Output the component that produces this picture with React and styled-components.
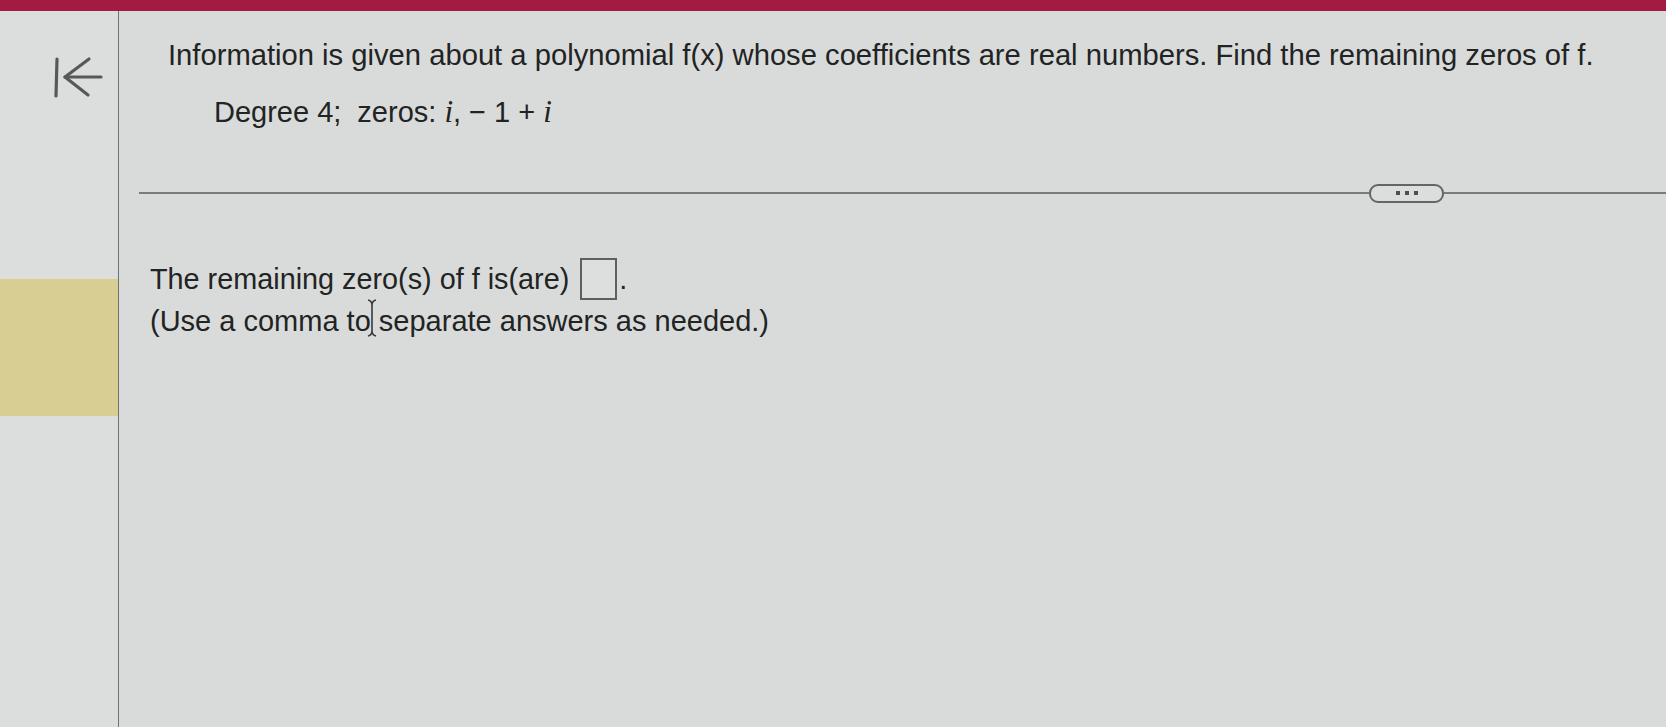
import React from 'react';
import styled, { createGlobalStyle } from 'styled-components';

// STYLES
const GlobalStyle = createGlobalStyle`
  html, body {
    margin: 0;
    padding: 0;
    background: #d9dbda;
  }
  body {
    font-family: 'Liberation Sans', Arial, sans-serif;
    color: #222323;
  }
`;

const Page = styled.div`
  display: flex;
  flex-direction: column;
  width: 100%;
  height: 727px;
  overflow: hidden;
`;

const TopBar = styled.div`
  height: 11px;
  flex-shrink: 0;
  background: #a31a42;
`;

const Body = styled.div`
  display: flex;
  flex: 1;
`;

const Sidebar = styled.aside`
  width: 118px;
  flex-shrink: 0;
  display: flex;
  flex-direction: column;
  background: #dcdedd;
  border-right: 1px solid #727272;
`;

const BackButton = styled.button`
  margin: 45px 0 0 52px;
  width: 52px;
  height: 42px;
  padding: 0;
  border: none;
  background: none;
  cursor: pointer;
  display: flex;
  align-items: center;
`;

const Highlight = styled.div`
  margin-top: 181px;
  height: 137px;
  background: #d8ce93;
`;

const Main = styled.main`
  flex: 1;
  display: flex;
  flex-direction: column;
  padding-top: 29px;
`;

const Question = styled.p`
  margin: 0 0 0 49px;
  font-size: 29.2px;
  line-height: 30px;
  white-space: nowrap;
`;

const Given = styled.p`
  margin: 27px 0 0 95px;
  font-size: 29px;
  line-height: 30px;
  white-space: nowrap;
`;

const Gap = styled.span`
  display: inline-block;
  width: ${(p) => p.w}px;
`;

const MathI = styled.span`
  font-family: 'Liberation Serif', 'Times New Roman', serif;
  font-style: italic;
  font-size: 31px;
`;

const RuleRow = styled.div`
  margin: 57px 0 0 20px;
  height: 18px;
  display: flex;
  align-items: center;
`;

const Rule = styled.div`
  height: 2px;
  background: #7a7b7b;
  flex: ${(p) => (p.fixed ? `0 0 ${p.fixed}px` : '1')};
`;

const MorePill = styled.button`
  width: 75px;
  height: 19px;
  box-sizing: border-box;
  padding: 0;
  border: 2px solid #646565;
  border-radius: 9px;
  background: #dcdedd;
  display: flex;
  align-items: center;
  justify-content: center;
  gap: 5px;
  cursor: pointer;
`;

const Dot = styled.span`
  width: 4px;
  height: 4px;
  background: #4e4f4f;
`;

const Answer = styled.div`
  margin: 55px 0 0 31px;
  display: flex;
  flex-direction: column;
`;

const AnswerLine = styled.div`
  display: flex;
  align-items: center;
  height: 44px;
  font-size: 28.8px;
  white-space: nowrap;
`;

const AnswerBox = styled.span`
  display: inline-block;
  width: 37px;
  height: 42px;
  box-sizing: border-box;
  margin: 0 2px 0 11px;
  border: 2px solid #5e6060;
  background: #dddfde;
`;

const Hint = styled.p`
  margin: 5px 0 0;
  font-size: 29px;
  line-height: 30px;
  white-space: nowrap;
`;

const CursorSpot = styled.span`
  position: relative;
`;

const TextCursor = styled.svg`
  position: absolute;
  left: -4px;
  top: -6px;
  pointer-events: none;
`;

// COMPONENT
const App = () => (
  <Page>
    <GlobalStyle />
    <TopBar />
    <Body>
      <Sidebar>
        <BackButton type="button" aria-label="back">
          <svg width="52" height="42" viewBox="0 0 52 42" fill="none" stroke="#575858" strokeWidth="3.2" strokeLinecap="round">
            <line x1="5" y1="3" x2="4" y2="40" />
            <line x1="13" y1="21" x2="49" y2="21" />
            <polyline points="37,3 13,21 36,39" strokeLinejoin="round" />
          </svg>
        </BackButton>
        <Highlight />
      </Sidebar>

      <Main>
        <Question>
          Information is given about a polynomial f(x) whose coefficients are real numbers. Find the
          remaining zeros of f.
        </Question>

        <Given>
          Degree 4;
          <Gap w={16} />
          zeros: <MathI>i</MathI>,<Gap w={8} />− 1 + <MathI>i</MathI>
        </Given>

        <RuleRow>
          <Rule fixed={1230} />
          <MorePill type="button" aria-label="more">
            <Dot />
            <Dot />
            <Dot />
          </MorePill>
          <Rule />
        </RuleRow>

        <Answer>
          <AnswerLine>
            The remaining zero(s) of f is(are)
            <AnswerBox />.
          </AnswerLine>
          <Hint>
            (Use a comma to
            <CursorSpot>
              {' '}
              <TextCursor width="10" height="38" viewBox="0 0 10 38" fill="none" stroke="#3a3a3a" strokeWidth="1.6">
                <path d="M1 1 Q5 2 5 6 L5 32 Q5 36 1 37 M9 1 Q5 2 5 6 M5 32 Q5 36 9 37" />
              </TextCursor>
            </CursorSpot>
            separate answers as needed.)
          </Hint>
        </Answer>
      </Main>
    </Body>
  </Page>
);

export default App;
